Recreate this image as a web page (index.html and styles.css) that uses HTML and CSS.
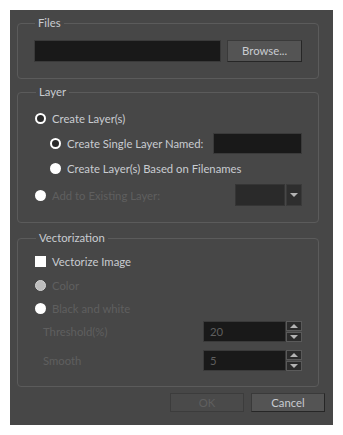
FILE: index.html
```html
<!DOCTYPE html>
<html lang="en">
<head>
    <meta charset="UTF-8">
    <title>Import Images</title>
    <link rel="stylesheet" href="styles.css">
</head>
<body>

    <div class="dialog">

        <!-- Files group -->
        <fieldset class="group group-files">
            <legend>Files</legend>
            <div class="row">
                <div class="text-field path-field"></div>
                <div class="button browse-button">Browse...</div>
            </div>
        </fieldset>

        <!-- Layer group -->
        <fieldset class="group group-layer">
            <legend>Layer</legend>
            <div class="option">
                <span class="radio radio-ring"></span>
                <span class="label">Create Layer(s)</span>
            </div>
            <div class="option option-sub option-input">
                <span class="radio radio-ring"></span>
                <span class="label">Create Single Layer Named:</span>
                <div class="text-field layer-name"></div>
            </div>
            <div class="option option-sub">
                <span class="radio radio-filled"></span>
                <span class="label">Create Layer(s) Based on Filenames</span>
            </div>
            <div class="option disabled option-input option-existing">
                <span class="radio radio-filled"></span>
                <span class="label">Add to Existing Layer:</span>
                <div class="combo">
                    <div class="combo-value"></div>
                    <div class="combo-arrow"><span class="tri-down"></span></div>
                </div>
            </div>
        </fieldset>

        <!-- Vectorization group -->
        <fieldset class="group group-vector">
            <legend>Vectorization</legend>
            <div class="option">
                <span class="checkbox"></span>
                <span class="label">Vectorize Image</span>
            </div>
            <div class="option disabled">
                <span class="radio radio-grey"></span>
                <span class="label">Color</span>
            </div>
            <div class="option disabled option-short">
                <span class="radio radio-filled"></span>
                <span class="label">Black and white</span>
            </div>
            <div class="option disabled option-param">
                <span class="label">Threshold(%)</span>
                <div class="spinbox">
                    <div class="spin-value">20</div>
                    <div class="spin-buttons">
                        <div class="spin-btn"><span class="tri-up"></span></div>
                        <div class="spin-btn"><span class="tri-down"></span></div>
                    </div>
                </div>
            </div>
            <div class="option disabled option-param option-smooth">
                <span class="label">Smooth</span>
                <div class="spinbox">
                    <div class="spin-value">5</div>
                    <div class="spin-buttons">
                        <div class="spin-btn"><span class="tri-up"></span></div>
                        <div class="spin-btn"><span class="tri-down"></span></div>
                    </div>
                </div>
            </div>
        </fieldset>

        <!-- Dialog buttons -->
        <div class="footer">
            <div class="button footer-button disabled-button">OK</div>
            <div class="button footer-button">Cancel</div>
        </div>

    </div>

</body>
</html>
```

FILE: styles.css
```css
/* Page */
body {
    margin: 10px;
    background: #ffffff;
    font-family: Lato, "Noto Sans", sans-serif;
    font-size: 11.3px;
    color: #c9ccd1;
}

/* Dialog window */
.dialog {
    width: 323px;
    height: 415px;
    box-sizing: border-box;
    background: #474747;
    padding: 5px 14px 0 7px;
    white-space: nowrap;
}

/* Group boxes */
.group {
    margin: 0;
    min-width: 0;
    border: 1px solid #5b5b5b;
    border-radius: 4px;
    display: flex;
    flex-direction: column;
}
.group legend {
    padding: 0 3px;
    margin-left: 1px;
    line-height: 16px;
    color: #c9ccd1;
}
.group-files {
    padding: 9px 16px 16px 16px;
}
.group-layer {
    margin-top: 5px;
    padding: 8px 16px 16px 17px;
    gap: 4px;
}
.group-vector {
    margin-top: 7px;
    padding: 5px 16px 15px 17px;
    gap: 4px;
}

.row {
    display: flex;
    align-items: center;
    gap: 6px;
}

/* Text fields */
.text-field {
    box-sizing: border-box;
    height: 22px;
    background: #191919;
    border: 1px solid #3a3a3a;
}
.path-field {
    width: 188px;
}
.layer-name {
    width: 89px;
    height: 21px;
    margin-left: auto;
}

/* Buttons */
.button {
    box-sizing: border-box;
    display: flex;
    align-items: center;
    justify-content: center;
    background: #545454;
    border: 1px solid #3a3a3a;
    border-right-color: #262626;
    border-bottom-color: #262626;
    color: #c9ccd1;
}
.browse-button {
    width: 75px;
    height: 22px;
    padding-bottom: 1px;
}

/* Options (radio / checkbox rows) */
.option {
    display: flex;
    align-items: center;
    height: 20px;
}
.option-sub {
    padding-left: 15px;
}
.option-input {
    height: 22px;
}
.option-existing {
    margin-top: 2px;
}
.option-short {
    height: 18px;
}
.option .label {
    margin-left: 6px;
}
.disabled .label {
    color: #5f5f5f;
}

.radio {
    box-sizing: border-box;
    width: 11px;
    height: 11px;
    border-radius: 50%;
    flex-shrink: 0;
}
.radio-ring {
    background: #2a2a2a;
    border: 2px solid #ffffff;
}
.radio-filled {
    background: #ffffff;
}
.radio-grey {
    background: #bdbdbd;
    border: 1px solid #d4d4d4;
}

.checkbox {
    width: 11px;
    height: 11px;
    background: #ffffff;
    flex-shrink: 0;
}

/* Combo box */
.combo {
    margin-left: auto;
    display: flex;
    height: 22px;
}
.combo-value {
    width: 50px;
    background: #2a2a2a;
    border: 1px solid #353535;
    box-sizing: border-box;
}
.combo-arrow {
    width: 16px;
    margin-left: 1px;
    background: #2e2e2e;
    border: 1px solid #3a3a3a;
    box-sizing: border-box;
    display: flex;
    align-items: center;
    justify-content: center;
}

/* Triangles for arrows */
.tri-down {
    width: 0;
    height: 0;
    border-left: 4px solid transparent;
    border-right: 4px solid transparent;
    border-top: 4px solid #b4b4b4;
}
.tri-up {
    width: 0;
    height: 0;
    border-left: 4px solid transparent;
    border-right: 4px solid transparent;
    border-bottom: 4px solid #b4b4b4;
}

/* Spin boxes */
.option-param {
    height: 21px;
}
.option-param .label {
    margin-left: 8px;
}
.option-smooth {
    margin-top: 4px;
}
.spinbox {
    margin-left: auto;
    display: flex;
    height: 21px;
}
.spin-value {
    width: 83px;
    box-sizing: border-box;
    background: #191919;
    border: 1px solid #3a3a3a;
    padding-left: 6px;
    line-height: 19px;
    color: #5f5f5f;
}
.spin-buttons {
    width: 16px;
    display: flex;
    flex-direction: column;
    gap: 1px;
}
.spin-btn {
    flex: 1;
    box-sizing: border-box;
    background: #2b2b2b;
    border: 1px solid #5a5a5a;
    display: flex;
    align-items: center;
    justify-content: center;
}

/* Dialog footer */
.footer {
    display: flex;
    justify-content: flex-end;
    gap: 7px;
    margin-top: 6px;
    margin-right: -6px;
}
.footer-button {
    width: 74px;
    height: 19px;
}
.disabled-button {
    color: #5f5f5f;
    background: #4a4a4a;
    border-color: #3c3c3c;
}
```
